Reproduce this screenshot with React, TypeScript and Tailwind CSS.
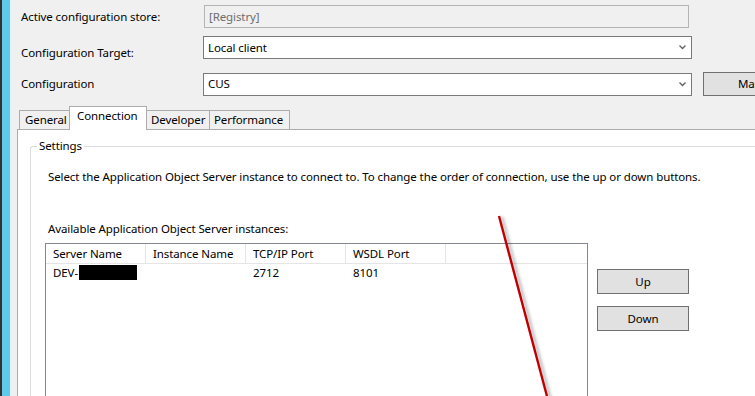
import React from 'react';

const font = { fontFamily: '"Noto Sans", "Open Sans", sans-serif' };

function Chevron() {
  return (
    <svg width="7" height="5" viewBox="0 0 7 5" className="mr-[5px]">
      <polyline points="0.5,0.5 3.5,3.5 6.5,0.5" fill="none" stroke="#606060" strokeWidth="1.3" />
    </svg>
  );
}

function Combo({ value }: { value: string }) {
  return (
    <div className="flex h-[23px] w-[489px] shrink-0 items-center justify-between border border-[#7a7a7a] bg-white pl-[4px]">
      <span>{value}</span>
      <Chevron />
    </div>
  );
}

export default function App() {
  const columns = ['Server Name', 'Instance Name', 'TCP/IP Port', 'WSDL Port'];

  return (
    <div
      className="relative flex h-[396px] w-[755px] overflow-hidden bg-[#f0f0f0] text-[11.5px] leading-[16px] tracking-[-0.1px] text-black"
      style={font}
    >
      {/* window edge */}
      <div className="w-[2px] shrink-0 bg-[#3b3030]" />
      <div className="w-[8px] shrink-0 bg-[#5ecbed]" />
      <div className="w-[1px] shrink-0 bg-[#dff2f9]" />

      <div className="flex min-w-0 flex-1 flex-col">
        {/* Configuration fields */}
        <div className="flex flex-col pl-[10px] pt-[5px]">
          <div className="flex h-[23px] items-center">
            <span className="w-[183px] shrink-0">Active configuration store:</span>
            <div className="flex h-[23px] w-[485px] shrink-0 items-center border border-[#b4b4b4] bg-[#f0f0f0] pl-[4px] text-[#6d6d6d]">
              [Registry]
            </div>
          </div>
          <div className="mt-[8px] flex h-[23px] items-center">
            <span className="w-[182px] shrink-0 pt-[10px]">Configuration Target:</span>
            <Combo value="Local client" />
          </div>
          <div className="mt-[13px] flex h-[24px] items-center">
            <span className="w-[182px] shrink-0">Configuration</span>
            <Combo value="CUS" />
            <div className="ml-[11px] flex h-[24px] w-[110px] shrink-0 items-center border border-[#707070] bg-[#e1e1e1] pl-[34px]">
              Manage...
            </div>
          </div>
        </div>

        {/* Tabs */}
        <div className="mt-[10px] flex items-end pl-[8px]">
          <div className="flex h-[19px] w-[51px] items-center border border-b-0 border-[#acacac] bg-[#f0f0f0] pl-[5px]">
            General
          </div>
          <div className="relative z-10 -mb-px -ml-px flex h-[24px] w-[78px] items-start border border-b-0 border-[#acacac] bg-white pl-[7px] pt-[1px]">
            Connection
          </div>
          <div className="-ml-px flex h-[19px] w-[64px] items-center border border-b-0 border-[#acacac] bg-[#f0f0f0] pl-[4px]">
            Developer
          </div>
          <div className="-ml-px flex h-[19px] w-[81px] items-center border border-b-0 border-[#acacac] bg-[#f0f0f0] pl-[4px]">
            Performance
          </div>
        </div>

        {/* Tab panel */}
        <div className="ml-[6px] flex-1 border-l border-t border-[#acacac] bg-white pl-[12px] pt-[8px]">
          <fieldset className="h-[400px] rounded-tl-[3px] border-l border-t border-[#dcdcdc] pl-[17px]">
            <legend className="-ml-[11px] px-[2px]">Settings</legend>
            <p className="mt-[15px] whitespace-nowrap">
              Select the Application Object Server instance to connect to. To change the order of connection, use the
              up or down buttons.
            </p>
            <p className="mt-[36px] whitespace-nowrap">Available Application Object Server instances:</p>
            <div className="mt-[6px] ml-[-3px] flex">
              {/* List view */}
              <div className="h-[200px] w-[543px] shrink-0 border border-[#828790] bg-white">
                <div className="flex h-[20px] border-b border-[#e5e5e5]">
                  {columns.map((c) => (
                    <div key={c} className="flex w-[100px] items-center border-r border-[#e5e5e5] pl-[7px]">
                      {c}
                    </div>
                  ))}
                </div>
                <div className="flex h-[17px] items-center">
                  <div className="flex w-[100px] items-center pl-[7px]">
                    DEV-
                    <span className="ml-[1px] inline-block h-[15px] w-[58px] bg-black" />
                  </div>
                  <div className="w-[100px]" />
                  <div className="w-[100px] pl-[7px]">2712</div>
                  <div className="w-[100px] pl-[7px]">8101</div>
                </div>
              </div>

              {/* Order buttons */}
              <div className="ml-[9px] mt-[26px] flex flex-col gap-[12px]">
                <button className="flex h-[25px] w-[92px] items-center justify-center border border-[#707070] bg-[#e1e1e1]">
                  Up
                </button>
                <button className="flex h-[25px] w-[92px] items-center justify-center border border-[#707070] bg-[#e1e1e1]">
                  Down
                </button>
              </div>
            </div>
          </fieldset>
        </div>
      </div>

      {/* red annotation stroke */}
      <svg className="pointer-events-none absolute left-0 top-0" width="755" height="396">
        <defs>
          <filter id="shadow" x="-50%" y="-10%" width="200%" height="120%">
            <feDropShadow dx="3" dy="1" stdDeviation="1.5" floodColor="#000" floodOpacity="0.3" />
          </filter>
        </defs>
        <line x1="499" y1="216" x2="548" y2="400" stroke="#c00000" strokeWidth="2.4" filter="url(#shadow)" />
      </svg>
    </div>
  );
}
